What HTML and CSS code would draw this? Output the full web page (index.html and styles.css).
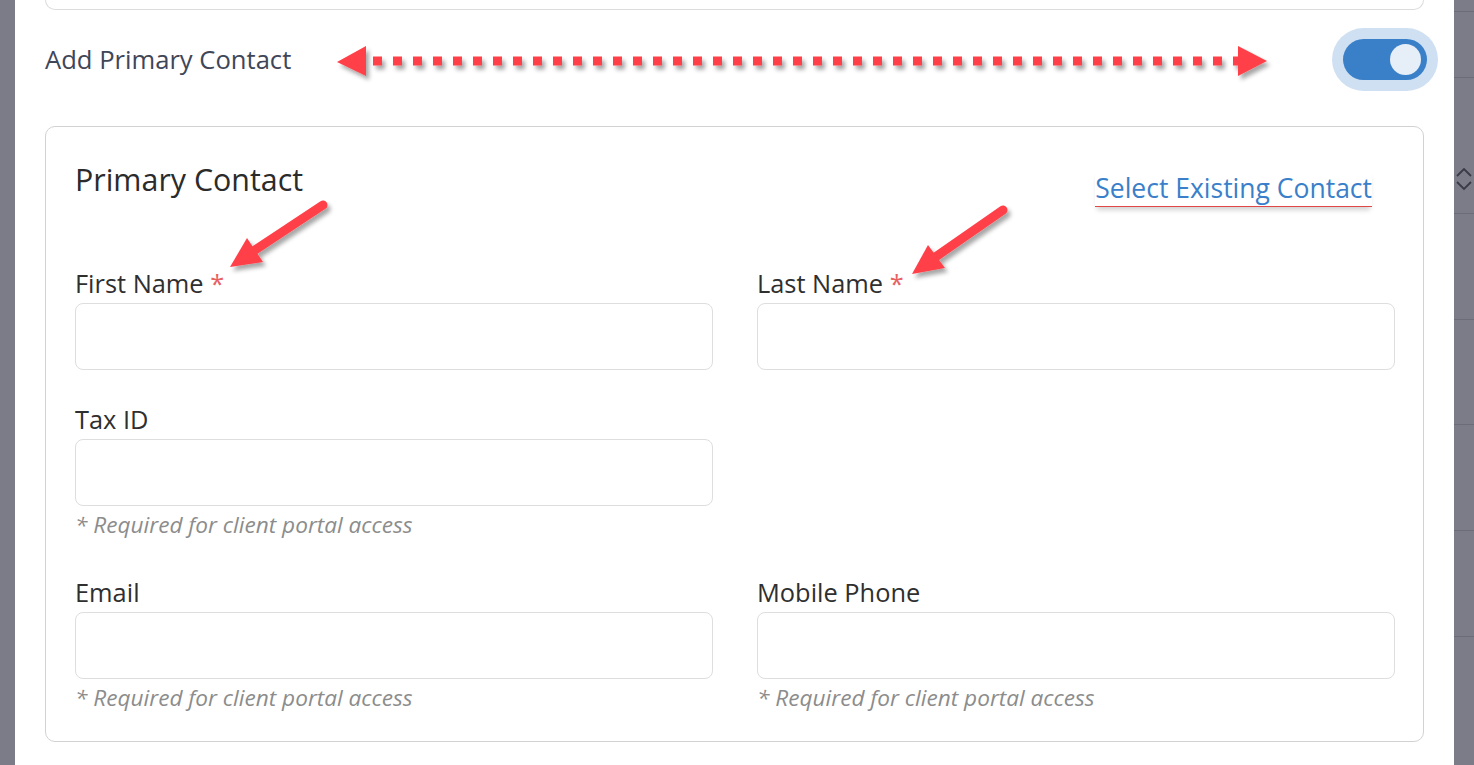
FILE: index.html
```html
<!DOCTYPE html>
<html lang="en">
<head>
	<meta charset="UTF-8">
	<meta name="viewport" content="width=device-width, initial-scale=1.0">
	<title>Add Primary Contact</title>
	<link rel="stylesheet" href="styles.css">
</head>
<body>
	<div class="screen">
		<div class="modal">
			<div class="prev-card"></div>

			<div class="toggle-row">
				<span class="toggle-label">Add Primary Contact</span>
				<div class="toggle on"><div class="knob"></div></div>
			</div>

			<div class="card">
				<div class="card-head">
					<h2>Primary Contact</h2>
					<a class="select-link" href="#">Select Existing Contact</a>
				</div>

				<div class="form-grid">
					<div class="field">
						<label>First Name <span class="req">*</span></label>
						<input type="text">
					</div>
					<div class="field">
						<label>Last Name <span class="req">*</span></label>
						<input type="text">
					</div>

					<div class="field">
						<label>Tax ID</label>
						<input type="text">
						<div class="hint">* Required for client portal access</div>
					</div>
					<div class="field"></div>

					<div class="field">
						<label>Email</label>
						<input type="text">
						<div class="hint">* Required for client portal access</div>
					</div>
					<div class="field">
						<label>Mobile Phone</label>
						<input type="text">
						<div class="hint">* Required for client portal access</div>
					</div>
				</div>
			</div>
		</div>

		<!-- table behind the modal -->
		<div class="behind">
			<div class="row" style="height:12px"></div>
			<div class="row" style="height:66px"></div>
			<div class="row" style="height:136px">
				<svg class="sort" width="16" height="24" viewBox="0 0 16 24"><path d="M1 9 L8 2 L15 9 M1 15 L8 22 L15 15" fill="none" stroke="#3a3a46" stroke-width="1.8"/></svg>
			</div>
			<div class="row" style="height:106px"></div>
			<div class="row" style="height:105px"></div>
			<div class="row" style="height:106px"></div>
			<div class="row" style="height:106px"></div>
			<div class="row last"></div>
		</div>
	</div>

	<!-- annotation arrows -->
	<svg class="marks" width="1474" height="765" viewBox="0 0 1474 765">
		<defs>
			<filter id="shadow" x="-20%" y="-50%" width="140%" height="200%">
				<feDropShadow dx="3" dy="4" stdDeviation="2" flood-color="#000" flood-opacity="0.35"/>
			</filter>
		</defs>
		<g filter="url(#shadow)" fill="#ff4149">
			<line x1="373" y1="61" x2="1238" y2="61" stroke="#ff4149" stroke-width="9" stroke-dasharray="9 11"/>
			<polygon points="337,62 366,46 366,76"/>
			<polygon points="1267,61 1238,46 1238,76"/>

			<line x1="323" y1="205" x2="252" y2="252" stroke="#ff4149" stroke-width="9" stroke-linecap="round"/>
			<polygon points="230,267 247,238 263,262"/>

			<line x1="1003" y1="210" x2="934" y2="258" stroke="#ff4149" stroke-width="9" stroke-linecap="round"/>
			<polygon points="912,274 928,245 945,268"/>
		</g>
	</svg>
</body>
</html>
```

FILE: styles.css
```css
* {
	box-sizing: border-box;
}

body {
	margin: 0;
	background-color: #7c7c88;
	font-family: "Open Sans", "Noto Sans", sans-serif;
	overflow: hidden;
}

.screen {
	display: flex;
	height: 765px;
	padding-left: 15px;
}

.modal {
	width: 1439px;
	background-color: #fff;
	padding: 0 30px;
}

.prev-card {
	height: 10px;
	border: 1px solid #dcdcdc;
	border-top: none;
	border-radius: 0 0 10px 10px;
}

.toggle-row {
	display: flex;
	align-items: center;
	justify-content: space-between;
	height: 116px;
	margin-right: -3px;
	padding-bottom: 18px;
}

.toggle-label {
	font-size: 25.6px;
	color: #3f4658;
}

.toggle {
	width: 84px;
	height: 41px;
	border-radius: 21px;
	background-color: #3a80c9;
	box-shadow: 0 0 0 11px #cfe0f2;
	position: relative;
}

.knob {
	position: absolute;
	right: 6px;
	top: 5px;
	width: 31px;
	height: 31px;
	border-radius: 50%;
	background-color: #e6eef8;
}

.card {
	height: 616px;
	border: 1px solid #d2d2d2;
	border-radius: 10px;
	padding: 33px 28px 0 29px;
}

.card-head {
	display: flex;
	justify-content: space-between;
	align-items: flex-start;
	height: 108px;
}

.card-head h2 {
	margin: 0;
	font-size: 30.4px;
	font-weight: normal;
	line-height: 40px;
	color: #2b2b2b;
}

.select-link {
	margin-top: 10px;
	margin-right: 23px;
	font-size: 26.5px;
	font-weight: 500;
	line-height: 36px;
	color: #3a7fca;
	text-decoration: none;
	border-bottom: 1px solid #e04848;
	box-shadow: 0 5px 5px -2px rgba(0, 0, 0, 0.18);
}

.form-grid {
	display: grid;
	grid-template-columns: 638px 638px;
	column-gap: 44px;
	row-gap: 34px;
}

.field label {
	display: block;
	font-size: 25.4px;
	line-height: 30px;
	color: #2f2f2f;
	margin-bottom: 5px;
}

.req {
	color: #e86060;
}

.field input {
	display: block;
	width: 100%;
	height: 67px;
	border: 1px solid #dedede;
	border-radius: 8px;
	background: #fff;
}

.hint {
	font-size: 22.6px;
	line-height: 26px;
	font-style: italic;
	color: #8c8c8c;
	margin-top: 6px;
	margin-bottom: 5px;
}

.behind {
	flex: 1;
	display: flex;
	flex-direction: column;
}

.behind .row {
	border-bottom: 1px solid #6c6c78;
	display: flex;
	align-items: center;
	padding-left: 2px;
}

.behind .row.last {
	flex: 1;
	border-bottom: none;
}

.sort {
	margin-top: 66px;
}

.marks {
	position: absolute;
	top: 0;
	left: 0;
	pointer-events: none;
}
```
